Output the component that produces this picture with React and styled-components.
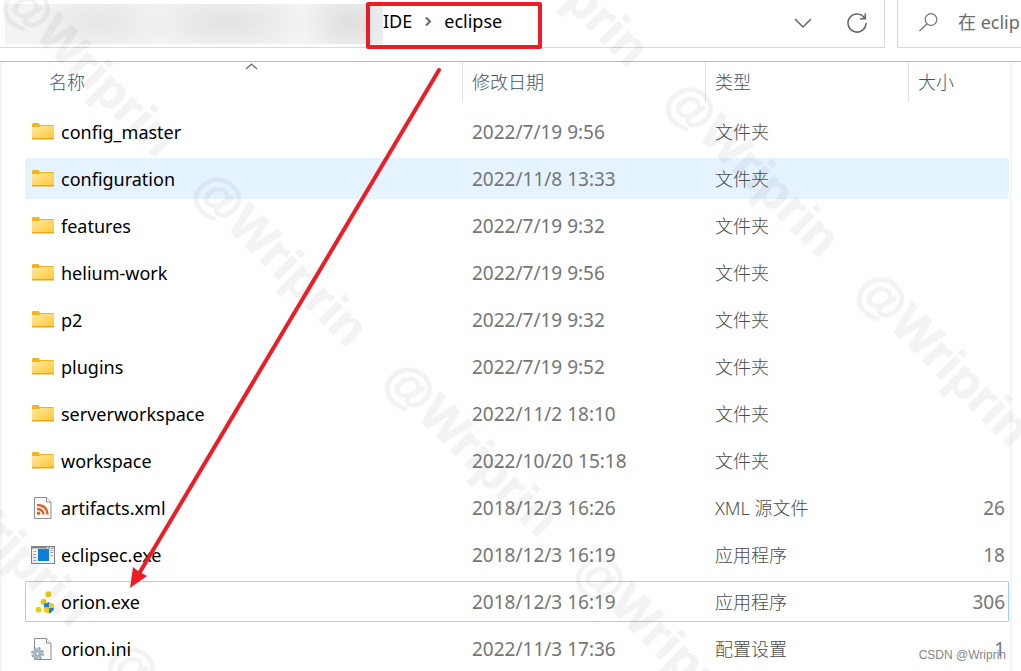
import React from "react";
import styled, { createGlobalStyle, css } from "styled-components";

const GlobalStyle = createGlobalStyle`
  * { box-sizing: border-box; }
  body {
    margin: 0;
    background: #fff;
    font-family: "Noto Sans", "Noto Sans CJK SC", sans-serif;
    font-size: 18px;
    line-height: 24px;
    color: #000;
  }
  button, input { font: inherit; color: inherit; }
`;

const Window = styled.div`
  position: relative;
  height: 100vh;
  overflow: hidden;
`;

const Toolbar = styled.header`
  display: flex;
  gap: 12px;
  height: 48px;
`;

const AddressBar = styled.nav`
  flex: 1;
  display: flex;
  align-items: flex-start;
  padding-left: 5px;
  border: solid #d9d9d9;
  border-width: 0 1px 1px 0;
`;

const HiddenPath = styled.div`
  width: 378px;
  height: 40px;
  margin-top: 4px;
  background:
    radial-gradient(ellipse 70px 34px at 96px 18px, #e6e6e6, transparent),
    radial-gradient(ellipse 80px 34px at 222px 18px, #e2e2e2, transparent),
    radial-gradient(ellipse 50px 40px at 346px 18px, #dedede, transparent),
    #f3f3f3;
`;

const Crumbs = styled.div`
  position: relative;
  display: flex;
  align-items: center;
  gap: 10px;
  height: 42px;
  padding-right: 40px;
`;

const PlainButton = styled.button`
  display: flex;
  align-items: center;
  padding: 0;
  border: 0;
  background: none;
  cursor: pointer;
`;

const Highlight = styled.div`
  position: absolute;
  inset: 2px 0 -7px -17px;
  border: 4px solid #ee1c25;
  border-radius: 2px;
  pointer-events: none;
`;

const BarActions = styled.div`
  display: flex;
  align-items: center;
  gap: 34px;
  height: 46px;
  margin-left: auto;
  padding-right: 16px;
`;

const SearchBox = styled.label`
  display: flex;
  align-items: center;
  gap: 20px;
  width: 124px;
  padding: 0 0 3px 20px;
  border: solid #d9d9d9;
  border-width: 0 0 1px 1px;
`;

const SearchInput = styled.input`
  flex: 1;
  min-width: 0;
  padding: 0;
  border: 0;
  outline: 0;
  background: none;
  &::placeholder { color: #6b6b6b; opacity: 1; }
`;

const Panel = styled.main`
  margin-top: 13px;
  border-top: 1px solid #b9b9b9;
`;

const PanelBody = styled.div`
  min-height: calc(100vh - 62px);
  margin-right: 9px;
  padding: 0 1px 0 23px;
  border: solid #f5f5f5;
  border-width: 0 2px;
`;

const FileTable = styled.table`
  display: block;
  width: 100%;
`;

const columns = css`
  display: grid;
  grid-template-columns: 437px 243px 203px 1fr;
`;

const HeadGroup = styled.thead`
  display: block;
`;

const HeadRow = styled.tr`
  ${columns}
  height: 40px;
`;

const HeadCell = styled.th`
  position: relative;
  display: flex;
  align-items: center;
  padding: 0 0 0 ${(p) => (p.$first ? 24 : 9)}px;
  border-left: ${(p) => (p.$first ? "0" : "1px solid #e2e2e2")};
  color: #3f5470;
  font-weight: 300;
`;

const SortMark = styled.svg`
  position: absolute;
  top: 1px;
  left: 220px;
`;

const Body = styled.tbody`
  display: grid;
  gap: 6px;
  padding-top: 9px;
`;

const Row = styled.tr`
  ${columns}
  height: 41px;
  border-radius: 2px;
  background: ${(p) => (p.$state === "hover" ? "#e5f3ff" : "transparent")};
  box-shadow: ${(p) => (p.$state === "focus" ? "inset 0 0 0 1px #99d1ff" : "none")};
`;

const Cell = styled.td`
  display: flex;
  align-items: center;
  padding: 0 0 0 10px;
  color: #757575;
`;

const NameCell = styled(Cell)`
  gap: 6px;
  padding-left: 6px;
  color: #000;
`;

const DateCell = styled(Cell)`
  font-size: 19px;
`;

const TypeCell = styled(Cell)`
  color: #4c4c4c;
  font-weight: 300;
`;

const SizeCell = styled(Cell)`
  justify-content: flex-end;
  padding-right: 4px;
  font-size: 19px;
`;

const Overlay = styled.div`
  position: absolute;
  inset: 0;
  overflow: hidden;
  pointer-events: none;
`;

const Watermark = styled.span`
  position: absolute;
  left: ${(p) => p.$x}px;
  top: ${(p) => p.$y}px;
  transform: translate(-50%, -50%) rotate(45deg);
  font: bold 50px/50px "Liberation Sans", sans-serif;
  color: #000;
  -webkit-text-stroke: 1px #000;
  opacity: 0.045;
  white-space: nowrap;
`;

const Arrow = styled.svg`
  position: absolute;
  left: 120px;
  top: 60px;
`;

const Credit = styled.span`
  position: absolute;
  right: 15px;
  bottom: 8px;
  font: 12px/16px "Liberation Sans", sans-serif;
  color: #858585;
`;

const FolderIcon = () => (
  <svg width="24" height="24" viewBox="0 0 24 24" aria-hidden="true">
    <defs>
      <linearGradient id="folder" x1="0" y1="0" x2="1" y2="1">
        <stop offset="0" stopColor="#ffe8a0" />
        <stop offset="1" stopColor="#ffc937" />
      </linearGradient>
    </defs>
    <path d="M1 4.500Q1 3 2 3h5.500l1.500 2h13q1 0 1 1v3H1z" fill="#f6b31b" />
    <path d="M1 7h7l1.500-1H23v12.500H1z" fill="url(#folder)" />
    <path d="M1 18h22v1q0 .5-.5.5h-21Q1 19.500 1 19z" fill="#e8a71c" />
  </svg>
);

const Sheet = () => (
  <>
    <path d="M3.500 1.500h12l4.500 4.500v16.500H3.500z" fill="#fafafa" stroke="#8d8d8d" />
    <path d="M15.500 1.500V6H20" fill="#fff" stroke="#8d8d8d" />
  </>
);

const XmlIcon = () => (
  <svg width="24" height="24" viewBox="0 0 24 24" aria-hidden="true">
    <Sheet />
    <g fill="none" stroke="#d2692a" strokeWidth="2.300">
      <path d="M6 9q10 0 10.500 9.500" />
      <path d="M6 13q6 0 6.500 5.500" />
    </g>
    <circle cx="7.500" cy="17.200" r="1.700" fill="#d2692a" />
  </svg>
);

const ConsoleIcon = () => (
  <svg width="24" height="24" viewBox="0 0 24 24" aria-hidden="true">
    <rect x=".5" y="3.500" width="23" height="17" fill="#f4f4f4" stroke="#7d868c" />
    <path d="M1 4.500h22" stroke="#7d868c" strokeWidth="2" />
    <path d="M16 4.500h1.500M19 4.500h1.500M21.500 4.500h1" stroke="#fff" />
    <rect x="7" y="6" width="11" height="12" fill="#0f7ed6" />
    <path d="M2.500 8.500H5M2.500 11.500H5M2.500 14.500H5M2.500 17.500H5M19.500 7.500H22M19.500 9.500H22M19.500 12.500H22" stroke="#9a9a9a" />
  </svg>
);

const OrionIcon = () => (
  <svg width="24" height="24" viewBox="0 0 24 24" aria-hidden="true">
    <g fill="#eccb13">
      <circle cx="17.300" cy="4.200" r="2.900" />
      <circle cx="12.500" cy="12" r="3" />
      <circle cx="7.500" cy="19.700" r="2.900" />
      <circle cx="15.500" cy="20" r="2.600" />
    </g>
    <path d="M18 12q-2.500 1.800-5 1.800v3.700h5zM18 17.500h5q0 4-5 6z" fill="#1684d7" />
    <path d="M18 12q2.500 1.800 5 1.800v3.700h-5zM18 17.500h-5q0 4 5 6z" fill="#fdc411" />
  </svg>
);

const IniIcon = () => (
  <svg width="24" height="24" viewBox="0 0 24 24" aria-hidden="true">
    <Sheet />
    <circle cx="6.500" cy="16.500" r="5.500" fill="none" stroke="#93a3ae" strokeWidth="2" strokeDasharray="2.300 2.020" />
    <circle cx="6.500" cy="16.500" r="3.500" fill="#e9eef1" stroke="#a9b8c2" strokeWidth="3" />
    <circle cx="6.500" cy="16.500" r="1.700" fill="#fff" stroke="#77858f" strokeWidth=".8" />
  </svg>
);

const icons = { folder: FolderIcon, xml: XmlIcon, console: ConsoleIcon, orion: OrionIcon, ini: IniIcon };

const files = [
  ["config_master", "2022/7/19 9:56", "文件夹", "", "folder"],
  ["configuration", "2022/11/8 13:33", "文件夹", "", "folder", "hover"],
  ["features", "2022/7/19 9:32", "文件夹", "", "folder"],
  ["helium-work", "2022/7/19 9:56", "文件夹", "", "folder"],
  ["p2", "2022/7/19 9:32", "文件夹", "", "folder"],
  ["plugins", "2022/7/19 9:52", "文件夹", "", "folder"],
  ["serverworkspace", "2022/11/2 18:10", "文件夹", "", "folder"],
  ["workspace", "2022/10/20 15:18", "文件夹", "", "folder"],
  ["artifacts.xml", "2018/12/3 16:26", "XML 源文件", "26", "xml"],
  ["eclipsec.exe", "2018/12/3 16:19", "应用程序", "18", "console"],
  ["orion.exe", "2018/12/3 16:19", "应用程序", "306", "orion", "focus"],
  ["orion.ini", "2022/11/3 17:36", "配置设置", "1", "ini"],
];

const marks = [
  [90, 68], [281, 258], [472, 448], [663, 638],
  [562, -22], [753, 168], [944, 358],
  [4, 538], [195, 728],
];

export default function App() {
  return (
    <>
      <GlobalStyle />
      <Window>
        <Toolbar>
          <AddressBar>
            <HiddenPath />
            <Crumbs>
              <PlainButton>IDE</PlainButton>
              <svg width="12" height="12" viewBox="0 0 12 12" fill="none" stroke="#666" strokeWidth="2" aria-hidden="true">
                <path d="M4 2.500 8 6.500 4 10.500" />
              </svg>
              <PlainButton>eclipse</PlainButton>
              <Highlight />
            </Crumbs>
            <BarActions>
              <PlainButton aria-label="展开">
                <svg width="18" height="20" viewBox="0 0 18 20" fill="none" stroke="#666" strokeWidth="1.500">
                  <path d="M1 6l8 8 8-8" />
                </svg>
              </PlainButton>
              <PlainButton aria-label="刷新">
                <svg width="22" height="22" viewBox="0 0 22 22" fill="none" stroke="#666" strokeWidth="1.600">
                  <path d="M18.600 6.200A9 9 0 1 0 20 11M19.300 1.500v5.300H14" />
                </svg>
              </PlainButton>
            </BarActions>
          </AddressBar>
          <SearchBox>
            <svg width="20" height="20" viewBox="0 0 20 20" fill="none" stroke="#777" strokeWidth="1.300" aria-hidden="true">
              <circle cx="13" cy="7.500" r="5.800" />
              <path d="M9 11.700 1.500 19" />
            </svg>
            <SearchInput aria-label="搜索" placeholder="在 eclip" />
          </SearchBox>
        </Toolbar>
        <Panel>
          <PanelBody>
            <FileTable>
              <HeadGroup>
                <HeadRow>
                  <HeadCell $first scope="col">
                    名称
                    <SortMark width="13" height="7" viewBox="0 0 13 7" fill="none" stroke="#666" strokeWidth="1.200" aria-hidden="true">
                      <path d="M1 6l5.500-5L12 6" />
                    </SortMark>
                  </HeadCell>
                  <HeadCell scope="col">修改日期</HeadCell>
                  <HeadCell scope="col">类型</HeadCell>
                  <HeadCell scope="col">大小</HeadCell>
                </HeadRow>
              </HeadGroup>
              <Body>
                {files.map(([name, date, type, size, kind, state]) => {
                  const Icon = icons[kind];
                  return (
                    <Row key={name} $state={state}>
                      <NameCell><Icon />{name}</NameCell>
                      <DateCell>{date}</DateCell>
                      <TypeCell>{type}</TypeCell>
                      <SizeCell>{size}</SizeCell>
                    </Row>
                  );
                })}
              </Body>
            </FileTable>
          </PanelBody>
        </Panel>
        <Overlay>
          {marks.map(([x, y]) => (
            <Watermark key={`${x},${y}`} $x={x} $y={y} aria-hidden="true">@Wriprin</Watermark>
          ))}
          <Arrow width="330" height="540" viewBox="0 0 330 540" aria-hidden="true">
            <path d="M319 10 20 512" stroke="#ee1c25" strokeWidth="4" strokeLinecap="round" />
            <path d="M10 528 13 507 18 511 27 516z" fill="#ee1c25" />
          </Arrow>
          <Credit>CSDN @Wriprin</Credit>
        </Overlay>
      </Window>
    </>
  );
}
